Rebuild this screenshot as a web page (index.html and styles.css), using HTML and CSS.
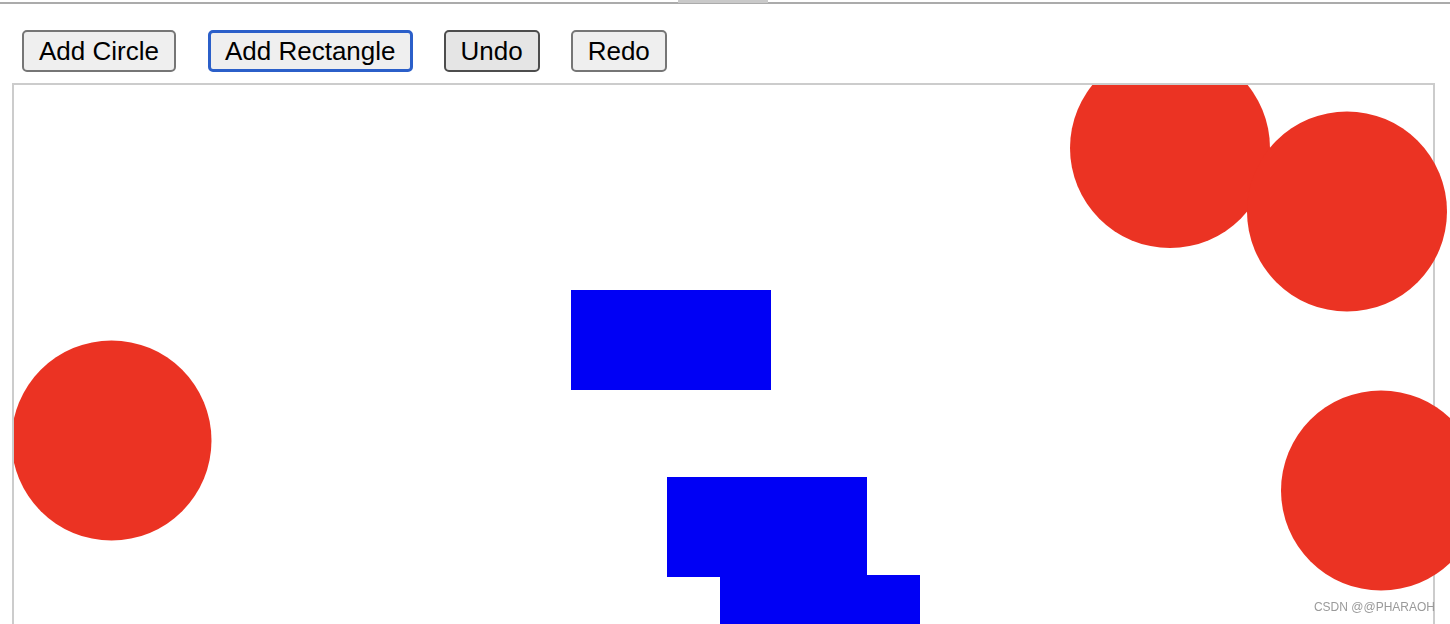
FILE: index.html
```html
<!DOCTYPE html>
<html>
<head>
<meta charset="utf-8">
<title>Shapes</title>
<link rel="stylesheet" href="styles.css">
</head>
<body>
<div class="chrome"><div class="chrome-tab"></div></div>
<div class="toolbar">
  <button class="btn">Add Circle</button>
  <button class="btn btn-focus">Add Rectangle</button>
  <button class="btn btn-hover">Undo</button>
  <button class="btn">Redo</button>
</div>
<div class="stage">
  <svg class="board" width="1500" height="700" viewBox="0 0 1500 700" xmlns="http://www.w3.org/2000/svg">
    <circle cx="1156" cy="63" r="100" fill="#eb3323"/>
    <circle cx="1333" cy="126.5" r="100" fill="#eb3323"/>
    <circle cx="97.5" cy="355.5" r="100" fill="#eb3323"/>
    <circle cx="1367" cy="405.5" r="100" fill="#eb3323"/>
    <rect x="557" y="205" width="200" height="100" fill="#0000f5"/>
    <rect x="653" y="392" width="200" height="100" fill="#0000f5"/>
    <rect x="706" y="490" width="200" height="100" fill="#0000f5"/>
  </svg>
</div>
<div class="watermark">CSDN @@PHARAOH</div>
</body>
</html>
```

FILE: styles.css
```css
html, body {
  margin: 0;
  padding: 0;
  background: #ffffff;
  font-family: "Liberation Sans", Arial, sans-serif;
  overflow: hidden;
}

.chrome {
  position: relative;
  height: 2px;
  border-bottom: 2px solid #ababab;
}

.chrome-tab {
  position: absolute;
  left: 678px;
  top: 0;
  width: 90px;
  height: 3px;
  background: #c9c9c9;
}

.toolbar {
  display: flex;
  gap: 31px;
  padding: 26px 0 0 22px;
  height: 42px;
}

.btn {
  box-sizing: border-box;
  height: 42px;
  padding: 0 15px;
  font-family: "Liberation Sans", Arial, sans-serif;
  font-size: 26px;
  color: #000000;
  background: #efefef;
  border: 2px solid #767676;
  border-radius: 5px;
  line-height: 1;
}

.btn-focus {
  border: 3px solid #2b5fc9;
  padding: 0 14px;
  margin-left: 1px;
}

.btn-hover {
  background: #e5e5e5;
  border-color: #4d4d4d;
}

.stage {
  box-sizing: border-box;
  margin: 11px 0 0 12px;
  width: 1423px;
  height: 700px;
  border: 2px solid #cccccc;
  overflow: visible;
}

.board {
  display: block;
}

.watermark {
  position: fixed;
  right: 15px;
  bottom: 10px;
  font-size: 12px;
  color: #9a9a9a;
  font-family: "Liberation Sans", Arial, sans-serif;
}
```
